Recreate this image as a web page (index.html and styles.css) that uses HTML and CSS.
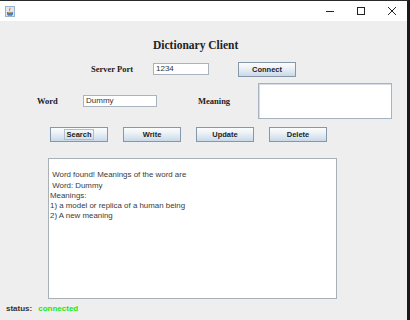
FILE: index.html
```html
<!DOCTYPE html>
<html>
<head>
<meta charset="utf-8">
<link rel="stylesheet" href="styles.css">
</head>
<body>
<div class="window">
  <div class="titlebar">
    <svg class="app-icon" width="10" height="11" viewBox="0 0 10 11">
      <rect x="0.5" y="0.5" width="9" height="10" fill="#dfe8f2" stroke="#9fb3c8"/>
      <path d="M5 1.5 C6.5 3 4 4 5.5 5.5 C3.5 5 4 3 5 1.5Z" fill="#e8741c"/>
      <path d="M2 6 H8 V8 C8 9.3 7 9.8 5 9.8 C3 9.8 2 9.3 2 8Z" fill="#4a7fbf"/>
      <path d="M3 6.5 H7" stroke="#f0a050" stroke-width="0.8"/>
    </svg>
    <div class="controls">
      <svg class="ctl" width="10" height="10" viewBox="0 0 10 10"><path d="M1 5.5 H9" stroke="#222" stroke-width="1"/></svg>
      <svg class="ctl" width="10" height="10" viewBox="0 0 10 10"><rect x="1.5" y="1.5" width="7" height="7" fill="none" stroke="#222" stroke-width="1"/></svg>
      <svg class="ctl" width="10" height="10" viewBox="0 0 10 10"><path d="M1 1 L9 9 M9 1 L1 9" stroke="#222" stroke-width="1"/></svg>
    </div>
  </div>
  <div class="content">
    <div class="heading">Dictionary Client</div>
    <div class="row row-port">
      <span class="label label-port">Server Port</span>
      <span class="field field-port">1234</span>
      <span class="button btn-connect">Connect</span>
    </div>
    <div class="row row-word">
      <span class="label label-word">Word</span>
      <span class="field field-word">Dummy</span>
      <span class="label label-meaning">Meaning</span>
      <span class="meaning-area"></span>
    </div>
    <div class="row row-actions">
      <span class="button"><span class="focus">Search</span></span>
      <span class="button">Write</span>
      <span class="button">Update</span>
      <span class="button">Delete</span>
    </div>
    <div class="output"><pre class="output-text">

 Word found! Meanings of the word are
 Word: Dummy
Meanings:
1) a model or replica of a human being
2) A new meaning</pre></div>
    <div class="status">
      <span class="status-label">status:</span>
      <span class="status-value">connected</span>
    </div>
  </div>
</div>
</body>
</html>
```
FILE: styles.css
```css
html, body {
  margin: 0;
  padding: 0;
}
body {
  width: 410px;
  height: 320px;
  overflow: hidden;
  background: #eeeeee;
}
.window {
  width: 407px;
  height: 319px;
  border-top: 1px solid #2a2a2a;
  border-right: 3px solid #1a1a1a;
  display: flex;
  flex-direction: column;
}
.titlebar {
  height: 20px;
  background: #ffffff;
  display: flex;
  align-items: center;
  flex-shrink: 0;
}
.app-icon {
  margin-left: 5px;
}
.controls {
  margin-left: auto;
  display: flex;
  align-items: center;
  gap: 21px;
  margin-right: 10px;
}
.ctl {
  display: block;
}
.content {
  flex: 1;
  background: #eeeeee;
  display: flex;
  flex-direction: column;
}
.heading {
  font-family: "Liberation Serif", serif;
  font-weight: bold;
  font-size: 11.5px;
  line-height: 14px;
  color: #222;
  margin-top: 17px;
  padding-left: 153px;
  letter-spacing: 0;
}
.row {
  display: flex;
  align-items: center;
}
.label {
  font-family: "Liberation Serif", serif;
  font-weight: bold;
  font-size: 8.5px;
  color: #222;
}
.row-port {
  margin-top: 9px;
  height: 16px;
  padding-left: 91px;
}
.label-port {
  width: 62px;
}
.field {
  box-sizing: border-box;
  height: 12px;
  background: #fff;
  border: 1px solid #a9b3bf;
  font-family: "Liberation Sans", sans-serif;
  font-size: 8px;
  line-height: 10px;
  color: #333;
  padding-left: 2px;
}
.field-port {
  width: 56px;
}
.button {
  box-sizing: border-box;
  width: 58px;
  height: 15px;
  border: 1px solid #8797aa;
  background: linear-gradient(#fbfcfe 0%, #eef3f8 35%, #d7e3ef 75%, #c9d8e8 100%);
  font-family: "Liberation Sans", sans-serif;
  font-weight: bold;
  font-size: 7.5px;
  color: #222;
  display: flex;
  align-items: center;
  justify-content: center;
}
.btn-connect {
  margin-left: 29px;
}
.row-word {
  margin-top: 6px;
  height: 36px;
  padding-left: 37px;
}
.label-word {
  width: 46px;
}
.field-word {
  width: 74px;
}
.label-meaning {
  margin-left: 41px;
  width: 60px;
}
.meaning-area {
  box-sizing: border-box;
  width: 134px;
  height: 36px;
  background: #fff;
  border: 1px solid #a7b3c0;
  box-shadow: inset 1px 1px 0 #d5dde6;
}
.row-actions {
  margin-top: 8px;
  height: 15px;
  padding-left: 50px;
  gap: 15px;
}
.focus {
  border: 1px solid #b4bec9;
  padding: 0 1px;
  line-height: 9px;
}
.output {
  box-sizing: border-box;
  margin-top: 16px;
  margin-left: 48px;
  width: 289px;
  height: 141px;
  background: #fff;
  border: 1px solid #a8b0b8;
  padding: 1px 0 0 1px;
}
.output-text {
  margin: 0;
  font-family: "Liberation Sans", sans-serif;
  font-size: 7.9px;
  line-height: 10.3px;
  color: #3a3a3a;
}
.status {
  margin-top: 4px;
  padding-left: 6px;
  display: flex;
  gap: 6px;
  font-family: "Liberation Sans", sans-serif;
  font-weight: bold;
  font-size: 8px;
  line-height: 12px;
}
.status-label {
  color: #333;
}
.status-value {
  color: #18e818;
}
```
